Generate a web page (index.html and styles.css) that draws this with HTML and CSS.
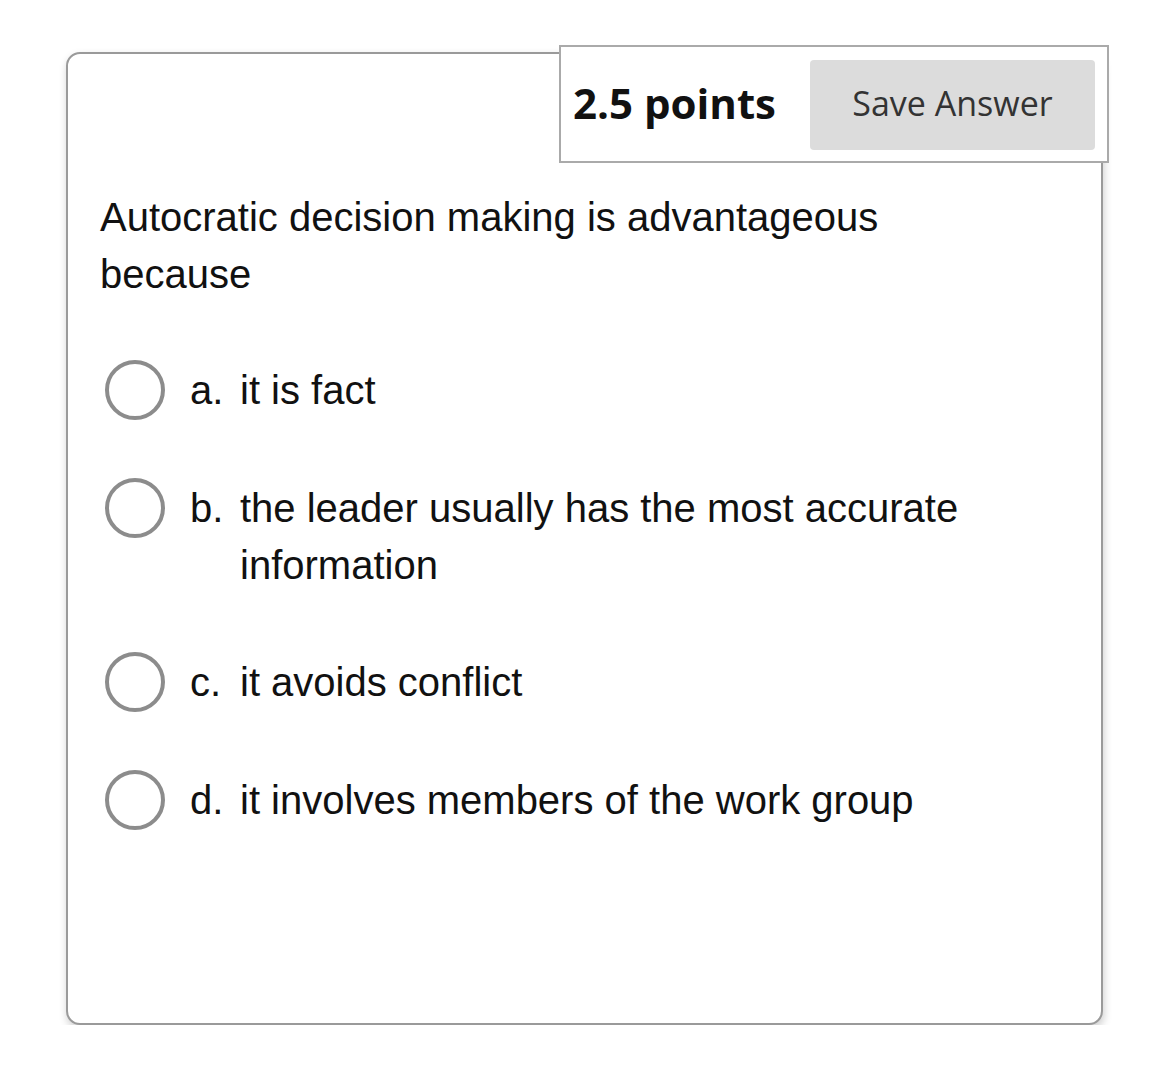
FILE: index.html
```html
<!DOCTYPE html>
<html>
<head>
    <meta name="viewport" content="width=device-width, initial-scale=1.0">
    <title>Question</title>
    <link rel="stylesheet" href="styles.css">
</head>
<body>
    <div class="card">
        <div class="points-box">
            <span class="points">2.5 points</span>
            <button class="save-btn">Save Answer</button>
        </div>

        <p class="question">Autocratic decision making is advantageous because</p>

        <div class="options">
            <label class="option">
                <input type="radio" name="answer">
                <span class="letter">a.</span>
                <span class="text">it is fact</span>
            </label>
            <label class="option">
                <input type="radio" name="answer">
                <span class="letter">b.</span>
                <span class="text">the leader usually has the most accurate information</span>
            </label>
            <label class="option">
                <input type="radio" name="answer">
                <span class="letter">c.</span>
                <span class="text">it avoids conflict</span>
            </label>
            <label class="option">
                <input type="radio" name="answer">
                <span class="letter">d.</span>
                <span class="text">it involves members of the work group</span>
            </label>
        </div>
    </div>
</body>
</html>
```

FILE: styles.css
```css
body {
    margin: 0;
    background: #fff;
    font-family: "Liberation Sans", Arial, sans-serif;
    color: #111;
}
.card {
    position: relative;
    box-sizing: border-box;
    width: 1037px;
    height: 973px;
    margin: 52px 0 0 66px;
    padding: 135px 100px 0 32px;
    background: #fff;
    border: 2px solid #9a9a9a;
    border-radius: 14px;
    box-shadow: 1px 4px 9px rgba(0,0,0,0.2);
}
.points-box {
    position: absolute;
    top: -9px;
    right: -8px;
    display: flex;
    align-items: center;
    padding: 13px 12px 11px 12px;
    background: #fff;
    border: 2px solid #aaa;
}
.points {
    font-family: "Open Sans", sans-serif;
    font-weight: bold;
    font-size: 42px;
    color: #111;
    margin: 0 34px 6px 0;
}
.save-btn {
    width: 285px;
    height: 90px;
    border: none;
    border-radius: 4px;
    background: #dcdcdc;
    color: #333;
    font-family: "Open Sans", sans-serif;
    font-size: 34px;
    padding: 0 0 5px 0;
}
.question {
    margin: 0 0 59px 0;
    font-size: 40px;
    line-height: 57px;
}
.options {
    display: flex;
    flex-direction: column;
    gap: 60px;
}
.option {
    display: flex;
    align-items: flex-start;
    font-size: 40px;
    line-height: 57px;
}
.option input {
    appearance: none;
    -webkit-appearance: none;
    box-sizing: border-box;
    flex: none;
    width: 60px;
    height: 60px;
    margin: -2px 25px 0 5px;
    border: 4px solid #8c8c8c;
    border-radius: 50%;
    background: #fff;
}
.letter {
    flex: none;
    width: 50px;
}
```
